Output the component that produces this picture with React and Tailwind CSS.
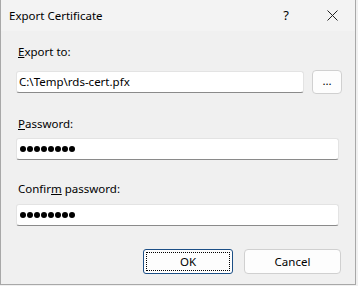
import React from 'react';

const font = { fontFamily: '"Noto Sans", "Open Sans", sans-serif' };

const Field = ({ children, className = '' }) => (
    <div className={`flex-none h-[22px] bg-white border border-[#e3e3e3] border-b-[#8a8a8a] rounded-[3px] flex items-center px-[2px] text-[11.5px] text-black ${className}`}>
        {children}
    </div>
);

const Dots = () => (
    <div className="flex items-center gap-[1px] pl-[1px]">
        {[0, 1, 2, 3, 4, 5, 6, 7].map((i) => (
            <span key={i} className="w-[6px] h-[6px] rounded-full bg-black" />
        ))}
    </div>
);

const App = () => {
    return (
        <div className="w-[358px] h-[286px] bg-[#f0f0f0] flex">
            <div className="w-[356px] h-[285px] border-l border-b border-r border-[#a8a8a8] bg-[#f0f0f0] flex flex-col text-[11.5px] text-black" style={font}>
                <div className="h-[31px] bg-[#f3f3f3] flex items-center">
                    <span className="ml-[8px] text-[11.5px]">Export Certificate</span>
                    <span className="ml-auto mr-[38px] text-[13px]">?</span>
                    <svg width="11" height="11" viewBox="0 0 11 11" className="mr-[17px]">
                        <path d="M0.5 0.5 L10.5 10.5 M10.5 0.5 L0.5 10.5" stroke="#222" strokeWidth="1" />
                    </svg>
                </div>

                <div className="flex flex-col pl-[15px] pr-[14px]">
                    <div className="mt-[13px] h-[16px] leading-[16px] ml-[2px]"><span className="underline">E</span>xport to:</div>
                    <div className="mt-[10px] flex items-center">
                        <Field className="w-[288px]">C:\Temp\rds-cert.pfx</Field>
                        <div className="flex-none ml-[8px] w-[30px] h-[24px] bg-[#fdfdfd] border border-[#d0d0d0] rounded-[4px] flex items-center justify-center leading-none pb-[2px]">...</div>
                    </div>

                    <div className="mt-[22px] h-[16px] leading-[16px] ml-[2px]"><span className="underline">P</span>assword:</div>
                    <Field className="mt-[6px] w-[323px]"><Dots /></Field>

                    <div className="mt-[21px] h-[16px] leading-[16px] ml-[2px]">Confir<span className="underline">m</span> password:</div>
                    <Field className="mt-[7px] w-[323px]"><Dots /></Field>

                    <div className="mt-[23px] flex justify-end gap-[11px]">
                        <div className="flex-none w-[90px] h-[25px] bg-[#fdfdfd] border border-[#1c4f86] rounded-[3px] p-[2px]">
                            <div className="w-full h-full border border-dotted border-black flex items-center justify-center">OK</div>
                        </div>
                        <div className="flex-none w-[97px] h-[25px] bg-[#fdfdfd] border border-[#d0d0d0] rounded-[4px] flex items-center justify-center">Cancel</div>
                    </div>
                </div>
            </div>
        </div>
    );
};

export default App;
